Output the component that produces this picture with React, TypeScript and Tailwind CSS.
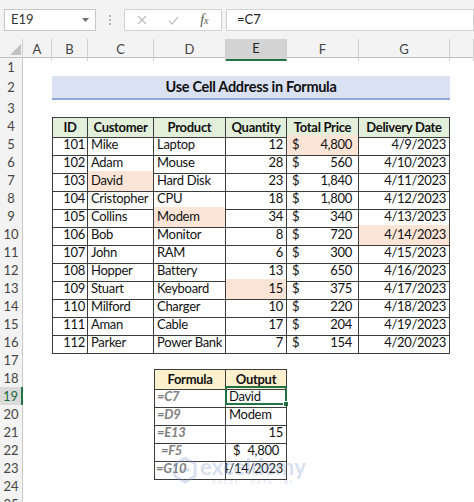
import React from "react";

const GRID = "grid grid-cols-[23px_29px_36px_66px_72px_61px_72px_91px_1fr]";
const TB = "border-r border-b border-[#3d3d3d]";
const HL = "bg-[#fce4d6]";

type Row = [number, string, string, number, string, string];
const data: Row[] = [
  [101, "Mike", "Laptop", 12, "4,800", "4/9/2023"],
  [102, "Adam", "Mouse", 28, "560", "4/10/2023"],
  [103, "David", "Hard Disk", 23, "1,840", "4/11/2023"],
  [104, "Cristopher", "CPU", 18, "1,800", "4/12/2023"],
  [105, "Collins", "Modem", 34, "340", "4/13/2023"],
  [106, "Bob", "Monitor", 8, "720", "4/14/2023"],
  [107, "John", "RAM", 6, "300", "4/15/2023"],
  [108, "Hopper", "Battery", 13, "650", "4/16/2023"],
  [109, "Stuart", "Keyboard", 15, "375", "4/17/2023"],
  [110, "Milford", "Charger", 10, "220", "4/18/2023"],
  [111, "Aman", "Cable", 17, "204", "4/19/2023"],
  [112, "Parker", "Power Bank", 7, "154", "4/20/2023"],
];
const hl: Record<number, string> = { 5: "F", 7: "C", 9: "D", 10: "G", 13: "E" };

function RH({ n, sel }: { n: number; sel?: boolean }) {
  return (
    <div
      className={`flex items-center justify-center border-b border-[#d6d6d6] text-[13px] ${
        sel
          ? "bg-[#dadada] text-[#1e6b41] border-r-2 border-r-[#217346]"
          : "bg-[#f3f3f3] text-[#444] border-r border-r-[#c9c9c9]"
      }`}
    >
      {n}
    </div>
  );
}

function C({ children, className = "" }: { children?: React.ReactNode; className?: string }) {
  return (
    <div
      className={`flex items-center overflow-hidden whitespace-nowrap text-[13px] tracking-[-0.3px] text-[#111] ${className}`}
    >
      {children}
    </div>
  );
}

function Empty({ n, h = "h-[18px]" }: { n: number; h?: string }) {
  return (
    <div className={`${GRID} ${h}`}>
      <RH n={n} />
    </div>
  );
}

export default function App() {
  return (
    <div className="relative h-[502px] w-[474px] overflow-hidden bg-white font-['Lato','Noto_Sans',sans-serif]">
      {/* formula bar */}
      <div className="flex h-[39px] bg-[#f3f3f3] pt-[9px]">
        <div className="ml-[4px] flex h-[22px] w-[92px] items-center justify-between border border-[#c8c8c8] bg-white pl-[6px] pr-[6px] text-[13px] text-[#333]">
          <span>E19</span>
          <svg width="7" height="4" viewBox="0 0 7 4">
            <path d="M0 0h7L3.5 4z" fill="#707070" />
          </svg>
        </div>
        <div className="flex h-[22px] w-[28px] flex-col items-center justify-center gap-[2px]">
          <span className="h-[2px] w-[2px] bg-[#b5b5b5]" />
          <span className="h-[2px] w-[2px] bg-[#b5b5b5]" />
          <span className="h-[2px] w-[2px] bg-[#b5b5b5]" />
        </div>
        <div className="flex h-[22px] w-[98px] items-center border border-[#d2d2d2] bg-white">
          <div className="flex w-[34px] justify-center">
            <svg width="10" height="10" viewBox="0 0 10 10">
              <path d="M1 1L9 9M9 1L1 9" stroke="#bdbdbd" strokeWidth="1.2" />
            </svg>
          </div>
          <div className="flex w-[30px] justify-center">
            <svg width="11" height="9" viewBox="0 0 11 9">
              <path d="M1 4.5L4 8L10 1" stroke="#c4c4c4" strokeWidth="1.2" fill="none" />
            </svg>
          </div>
          <div className="flex w-[34px] justify-center">
            <span className="font-['Liberation_Serif',serif] text-[14px] italic leading-none text-[#555]">
              f<span className="text-[10px]">x</span>
            </span>
          </div>
        </div>
        <div className="ml-[4px] flex h-[22px] flex-1 items-center border border-[#d2d2d2] bg-white pl-[10px] text-[13px] text-[#222]">
          =C7
        </div>
      </div>

      {/* column headers */}
      <div className={`${GRID} h-[19px] border-b border-[#bfbfbf] bg-[#f3f3f3] text-[13px] text-[#444]`}>
        <div className="relative border-r border-[#d0d0d0]">
          <svg className="absolute left-0 top-0" width="23" height="18" viewBox="0 0 23 18">
            <path d="M21 5V16H10z" fill="#c2c2c2" />
          </svg>
        </div>
        {["A", "B", "C", "D"].map((l) => (
          <div key={l} className="flex items-center justify-center border-r border-[#d0d0d0]">
            {l}
          </div>
        ))}
        <div className="flex items-center justify-center border-b-2 border-r border-b-[#217346] border-r-[#d0d0d0] bg-[#d3d3d3] text-[#222]">
          E
        </div>
        {["F", "G", ""].map((l, i) => (
          <div key={i} className="flex items-center justify-center border-r border-[#d0d0d0]">
            {l}
          </div>
        ))}
      </div>

      {/* sheet body */}
      <Empty n={1} />
      <div className={`${GRID} h-[23px]`}>
        <RH n={2} />
        <div />
        <div className="col-span-6 flex items-center justify-center border-b-2 border-[#8eaadb] bg-[#d9e1f2] text-[14.5px] font-bold tracking-[-0.3px] text-[#111]">
          Use Cell Address in Formula
        </div>
      </div>
      <Empty n={3} />

      {/* table header */}
      <div className={`${GRID} h-[18px]`}>
        <RH n={4} />
        <div />
        {["ID", "Customer", "Product", "Quantity", "Total Price", "Delivery Date"].map((h, i) => (
          <C
            key={h}
            className={`${TB} border-t justify-center bg-[#e2efda] font-bold text-[13.5px] ${i === 0 ? "border-l" : ""}`}
          >
            {h}
          </C>
        ))}
      </div>

      {data.map((r, idx) => {
        const n = idx + 5;
        const h = hl[n];
        return (
          <div key={n} className={`${GRID} h-[18px]`}>
            <RH n={n} />
            <div />
            <C className={`${TB} border-l justify-end pr-[2px]`}>{r[0]}</C>
            <C className={`${TB} pl-[3px] ${h === "C" ? HL : ""}`}>{r[1]}</C>
            <C className={`${TB} pl-[3px] ${h === "D" ? HL : ""}`}>{r[2]}</C>
            <C className={`${TB} justify-end pr-[3px] ${h === "E" ? HL : ""}`}>{r[3]}</C>
            <C className={`${TB} justify-between pl-[5px] pr-[6px] ${h === "F" ? HL : ""}`}>
              <span>$</span>
              <span>{r[4]}</span>
            </C>
            <C className={`${TB} justify-end pr-[3px] ${h === "G" ? HL : ""}`}>{r[5]}</C>
          </div>
        );
      })}

      <Empty n={17} />

      {/* formula table */}
      <div className={`${GRID} h-[18px]`}>
        <RH n={18} />
        <div />
        <div />
        <div />
        <C className={`${TB} border-l border-t justify-center bg-[#fdf0cd] font-bold text-[13.5px]`}>Formula</C>
        <C className={`${TB} border-t justify-center bg-[#fdf0cd] font-bold text-[13.5px]`}>Output</C>
      </div>
      {[
        { n: 19, f: "=C7", fp: "pl-[2px]", o: "David", oc: "pl-[3px]" },
        { n: 20, f: "=D9", fp: "pl-[2px]", o: "Modem", oc: "pl-[3px]" },
        { n: 21, f: "=E13", fp: "pl-[2px]", o: "15", oc: "justify-end pr-[3px]" },
        { n: 22, f: "=F5", fp: "pl-[6px]", o: "$", oc: "justify-between pl-[7px] pr-[7px]" },
        { n: 23, f: "=G10", fp: "pl-[1px]", o: "4/14/2023", oc: "justify-end pr-[3px]" },
      ].map((r) => (
        <div key={r.n} className={`${GRID} h-[18px]`}>
          <RH n={r.n} sel={r.n === 19} />
          <div />
          <div />
          <div />
          <C className={`${TB} border-l ${r.fp} font-bold italic text-[#808080]`}>{r.f}</C>
          <div className={`relative ${TB}`}>
            <C className={`h-full w-full ${r.oc}`}>
              {r.n === 22 ? (
                <>
                  <span>$</span>
                  <span>4,800</span>
                </>
              ) : (
                r.o
              )}
            </C>
            {r.n === 19 && (
              <div className="absolute -left-px -top-px h-[19px] w-[62px] border-2 border-[#217346]">
                <div className="absolute -bottom-[4px] -right-[4px] h-[6px] w-[6px] border border-white bg-[#217346]" />
              </div>
            )}
          </div>
        </div>
      ))}
      <Empty n={24} />
      <Empty n={25} />

      {/* watermark */}
      <div className="pointer-events-none absolute left-[173px] top-[456px] flex items-start gap-[3px] opacity-30">
        <svg width="24" height="28" viewBox="0 0 26 30">
          <path
            d="M13 2L24 8.5V21.5L13 28L2 21.5V8.5Z"
            fill="none"
            stroke="#7f9bcc"
            strokeWidth="3"
            strokeLinejoin="round"
          />
          <path d="M8 15h10" stroke="#7f9bcc" strokeWidth="3" />
        </svg>
        <div className="flex flex-col items-center">
          <span className="text-[22px] font-bold leading-[22px] tracking-[0.2px] text-[#7f9bcc]">exceldemy</span>
          <span className="text-[6px] leading-[8px] tracking-[2px] text-[#7f9bcc]">EXCEL · DATA · BI</span>
        </div>
      </div>
    </div>
  );
}
